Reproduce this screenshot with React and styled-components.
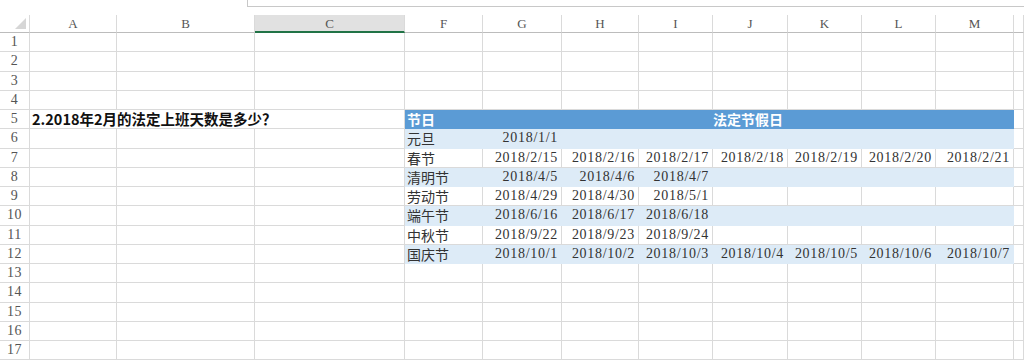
import React from 'react'
import styled, { createGlobalStyle } from 'styled-components';

const GlobalStyle = createGlobalStyle`
  html, body {
    margin: 0;
    padding: 0;
    background: #ffffff;
    overflow: hidden;
  }
`

const COLS = ['A', 'B', 'C', 'F', 'G', 'H', 'I', 'J', 'K', 'L', 'M', '']
const WIDTHS = '30px 87px 138px 150px 78px 79px 77px 74px 75px 74px 74px 78px 1fr'

const holidays = [
    { name: '元旦', dates: ['2018/1/1'] },
    { name: '春节', dates: ['2018/2/15', '2018/2/16', '2018/2/17', '2018/2/18', '2018/2/19', '2018/2/20', '2018/2/21'] },
    { name: '清明节', dates: ['2018/4/5', '2018/4/6', '2018/4/7'] },
    { name: '劳动节', dates: ['2018/4/29', '2018/4/30', '2018/5/1'] },
    { name: '端午节', dates: ['2018/6/16', '2018/6/17', '2018/6/18'] },
    { name: '中秋节', dates: ['2018/9/22', '2018/9/23', '2018/9/24'] },
    { name: '国庆节', dates: ['2018/10/1', '2018/10/2', '2018/10/3', '2018/10/4', '2018/10/5', '2018/10/6', '2018/10/7'] },
]

const FILLS = {
    head: { bg: '#5b9bd5', line: '#5b9bd5', color: '#ffffff' },
    band: { bg: '#ddebf7', line: '#ddebf7', color: '#333333' },
    none: { bg: '#ffffff', line: '#dadada', color: '#333333' },
}

const Sheet = ({ children }) => (
    <Wrapper>
        <TopBar>
            <FormulaBox />
        </TopBar>
        <Grid>{children}</Grid>
    </Wrapper>
)

const App = () => {
    const rows = []
    for (let r = 1; r <= 17; r++) {
        const cells = [<RowHeader key="h">{r}</RowHeader>]
        if (r === 5) {
            cells.push(<Cell key="q" $span={3} $question>2.2018年2月的法定上班天数是多少？</Cell>)
            cells.push(<Cell key="f" $fill="head" $bold>节日</Cell>)
            cells.push(<Cell key="g" $fill="head" $bold $span={7} $align="center">法定节假日</Cell>)
            cells.push(<Cell key="n" />)
        } else if (r >= 6 && r <= 12) {
            const h = holidays[r - 6]
            const fill = r % 2 === 0 ? 'band' : 'none'
            cells.push(<Cell key="a" />, <Cell key="b" />, <Cell key="c" />)
            cells.push(<Cell key="f" $fill={fill}>{h.name}</Cell>)
            for (let i = 0; i < 7; i++) {
                cells.push(<Cell key={'d' + i} $fill={fill} $align="right" $date>{h.dates[i] || ''}</Cell>)
            }
            cells.push(<Cell key="n" />)
        } else {
            COLS.forEach((c, i) => cells.push(<Cell key={i} />))
        }
        rows.push(<React.Fragment key={r}>{cells}</React.Fragment>)
    }

    return (
        <>
            <GlobalStyle />
            <Sheet>
                <Corner><Triangle /></Corner>
                {COLS.map((c, i) => (
                    <ColHeader key={i} $selected={c === 'C'}>{c}</ColHeader>
                ))}
                {rows}
            </Sheet>
        </>
    )
}

const Wrapper = styled.div`
    width: 1024px;
    height: 362px;
    background: #fff;
    overflow: hidden;
`

const TopBar = styled.div`
    height: 15px;
    display: flex;
    padding-left: 247px;
`

const FormulaBox = styled.div`
    flex: 1;
    height: 6px;
    border-left: 1px solid #c8c8c8;
    border-bottom: 1px solid #c8c8c8;
`

const Grid = styled.div`
    display: grid;
    grid-template-columns: ${WIDTHS};
    grid-template-rows: 18px repeat(17, 19.25px);
`

const Corner = styled.div`
    position: relative;
    border-right: 1px solid #dadada;
    border-bottom: 1px solid #bcbcbc;
    box-sizing: border-box;
`

const Triangle = styled.div`
    position: absolute;
    right: 3px;
    bottom: 3px;
    width: 0;
    height: 0;
    border-left: 11px solid transparent;
    border-bottom: 11px solid #d6d6d6;
`

const ColHeader = styled.div`
    box-sizing: border-box;
    display: flex;
    align-items: center;
    justify-content: center;
    border-right: 1px solid #dadada;
    border-bottom: ${p => p.$selected ? '2px solid #217346' : '1px solid #bcbcbc'};
    background: ${p => p.$selected ? '#e1e1e1' : '#ffffff'};
    color: #555;
    font-family: "Liberation Serif", serif;
    font-size: 13px;
    padding-top: 1px;
`

const RowHeader = styled.div`
    box-sizing: border-box;
    display: flex;
    align-items: center;
    justify-content: center;
    border-right: 1px solid #dadada;
    border-bottom: 1px solid #dadada;
    color: #555;
    font-family: "Liberation Serif", serif;
    font-size: 14px;
    letter-spacing: 0.4px;
`

const Cell = styled.div`
    box-sizing: border-box;
    grid-column: span ${p => p.$span || 1};
    display: flex;
    align-items: center;
    justify-content: ${p => p.$align === 'right' ? 'flex-end' : p.$align === 'center' ? 'center' : 'flex-start'};
    padding: ${p => p.$date ? '0 3px 0 0' : '0 2px'};
    white-space: nowrap;
    background: ${p => FILLS[p.$fill || 'none'].bg};
    color: ${p => p.$question ? '#111' : FILLS[p.$fill || 'none'].color};
    border-right: 1px solid ${p => FILLS[p.$fill || 'none'].line};
    border-bottom: 1px solid ${p => p.$fill === 'head' ? '#5b9bd5' : p.$fill === 'band' ? '#ddebf7' : '#dadada'};
    font-family: ${p => p.$date ? '"Liberation Serif", serif' : '"Noto Sans CJK SC", sans-serif'};
    font-size: ${p => p.$question ? '14.5px' : '14px'};
    font-weight: ${p => (p.$bold || p.$question) ? 700 : 400};
    letter-spacing: ${p => p.$date ? '0.7px' : '0'};
    line-height: 1;
`

export default App
